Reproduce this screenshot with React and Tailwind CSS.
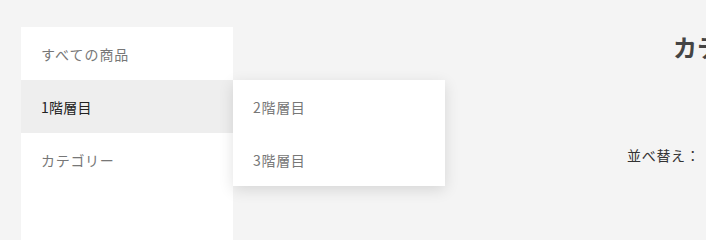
import React from 'react';

const font = { fontFamily: '"Noto Sans CJK JP", "Noto Sans", sans-serif' };

const SubMenu = () => (
  <div className="absolute left-full top-0 w-[212px] bg-white shadow-[0_4px_14px_rgba(0,0,0,0.12)] z-10">
    <div className="h-[53px] flex items-center pl-5 text-sm tracking-[0.05em] text-[#777]">2階層目</div>
    <div className="h-[53px] flex items-center pl-5 text-sm tracking-[0.05em] text-[#777]">3階層目</div>
  </div>
);

export default function App() {
  return (
    <div className="w-[706px] min-h-screen h-[202px] bg-[#f4f4f4] overflow-hidden flex pt-[27px] pl-[21px]" style={font}>
      <nav className="w-[212px] shrink-0 bg-white">
        <div className="h-[53px] flex items-center pl-5 pt-px text-sm tracking-[0.07em] text-[#777]">すべての商品</div>
        <div className="relative h-[53px] flex items-center pl-5 text-sm tracking-[0.02em] text-[#222] bg-[#eeeeee]">
          1階層目
          <SubMenu />
        </div>
        <div className="h-[53px] flex items-center pl-5 text-sm tracking-[0.05em] text-[#777]">カテゴリー</div>
      </nav>
      <main className="flex-1 flex flex-col">
        <h1 className="ml-[440px] mt-[2px] text-2xl font-bold text-[#444] whitespace-nowrap leading-9">カテゴリー</h1>
        <div className="ml-[394px] mt-[80px] text-sm tracking-[0.05em] text-[#333] whitespace-nowrap">並べ替え：</div>
      </main>
    </div>
  );
}
